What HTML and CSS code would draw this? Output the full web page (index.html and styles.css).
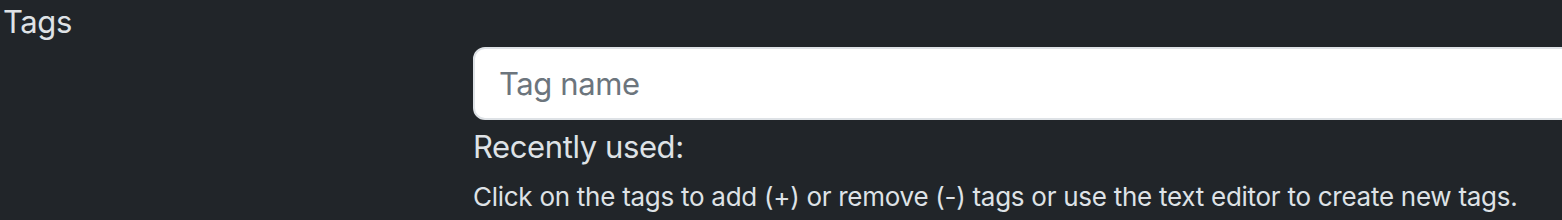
FILE: index.html
```html
<!DOCTYPE html>
<html lang="en">
<head>
    <meta charset="UTF-8">
    <meta name="viewport" content="width=device-width, initial-scale=1.0">
    <title>Tags</title>
    <link rel="stylesheet" href="styles.css">
</head>
<body>
    <div class="tags-field">
        <label class="field-label" for="tagInput">Tags</label>
        <div class="field-body">
            <input type="text" id="tagInput" class="tag-input" placeholder="Tag name">
            <div class="recent">Recently used:</div>
            <div class="help-text">Click on the tags to add (+) or remove (-) tags or use the text editor to create new tags.</div>
        </div>
    </div>
</body>
</html>
```

FILE: styles.css
```css
/* general */
* {
    box-sizing: border-box;
    font-family: Inter, "Noto Sans", sans-serif;
}

body {
    margin: 0;
    background: #212529;
    color: #dee2e6;
    overflow: hidden;
}

.tags-field {
    padding-left: 3px;
}

.field-label {
    display: block;
    font-size: 31px;
    letter-spacing: -0.4px;
    line-height: 44px;
}

.field-body {
    margin-left: 470px;
    width: 1200px;
}

.tag-input {
    display: block;
    width: 100%;
    height: 73px;
    margin-top: 3px;
    padding: 12px 24px;
    font-size: 31px;
    letter-spacing: -0.4px;
    color: #212529;
    background: #fff;
    border: 2px solid #dee2e6;
    border-radius: 12px;
}

.tag-input::placeholder {
    color: #6c757d;
}

.recent {
    font-size: 31px;
    letter-spacing: -0.4px;
    line-height: 44px;
    margin-top: 5px;
}

.help-text {
    font-size: 26px;
    letter-spacing: -0.27px;
    line-height: 36px;
    margin-top: 10px;
}
```
